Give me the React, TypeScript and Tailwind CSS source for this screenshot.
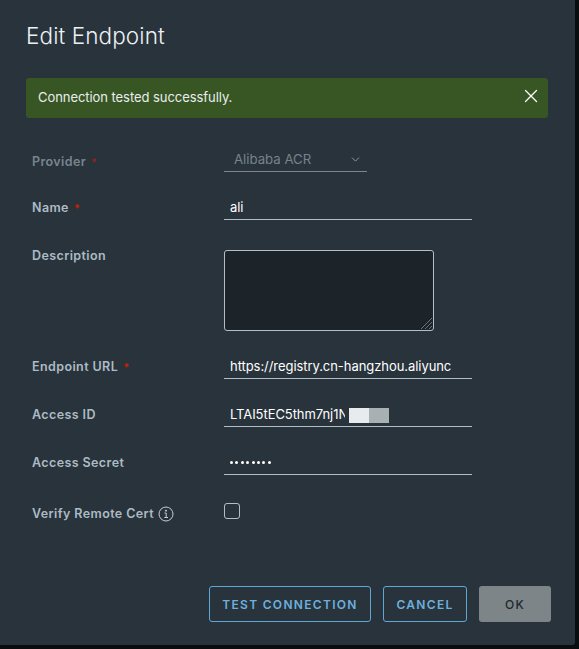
import { X, ChevronDown } from 'lucide-react';

const labelCls = 'w-[192px] shrink-0 text-[12.5px] leading-[20px] font-semibold text-[#adbbc4] tracking-[0.4px]';
const inputCls = 'relative h-[25px] w-[248px] border-b border-[#b3bfc6] pl-[6px] text-[13px] leading-[24px] text-white tracking-[-0.06px] whitespace-nowrap';

const Required = () => <span className="ml-[5px] text-[#c92100] text-[11px]">*</span>;

const App = () => {
  return (
    <div className="h-[649px] w-[579px] bg-[#0a0d0f] overflow-hidden font-['Inter','Open_Sans',sans-serif]">
      <div className="h-[645px] w-[575px] rounded-br-[3px] bg-[#28333c] pl-[26px] pr-[27px] pt-[21px] flex flex-col">
        <h1 className="text-[22.5px] leading-[30px] font-light text-[#eef1f3] tracking-[0.1px]">Edit Endpoint</h1>

        <div className="mt-[27px] h-[40px] rounded-[3px] bg-[#375623] pl-[12px] pr-[6px] flex items-center justify-between">
          <span className="text-[13px] text-[#eaedf0] tracking-[-0.06px]">Connection tested successfully.</span>
          <X className="w-[22px] h-[22px] text-white mb-[4px]" strokeWidth={1.4} />
        </div>

        <div className="mt-[24px] pl-[6px] flex flex-col">
          <div className="flex items-end h-[30px]">
            <span className={`${labelCls} opacity-60`}>
              Provider<Required />
            </span>
            <div className="h-[30px] w-[143px] border-b border-[#7c878e] pl-[10px] pr-[5px] flex items-center justify-between text-[13.2px] text-[#76838b] pt-[6px]">
              Alibaba ACR
              <ChevronDown className="w-[13px] h-[13px] text-[#a3adb3]" strokeWidth={1.5} />
            </div>
          </div>

          <div className="mt-[23px] flex items-center h-[25px]">
            <span className={labelCls}>
              Name<Required />
            </span>
            <div className={inputCls}>ali</div>
          </div>

          <div className="mt-[30px] flex items-start h-[81px]">
            <span className={`${labelCls} mt-[-4px]`}>Description</span>
            <div className="relative h-[81px] w-[210px] rounded-[3px] border border-[#b3bfc6] bg-[#1c2329]">
              <svg className="absolute right-0 bottom-0" width="13" height="13" viewBox="0 0 13 13" fill="none" stroke="#8b969d" strokeWidth="0.7">
                <path d="M1 12 12 1M5 12 12 5M9 12 12 9" />
              </svg>
            </div>
          </div>

          <div className="mt-[23px] flex items-center h-[25px]">
            <span className={labelCls}>
              Endpoint URL<Required />
            </span>
            <div className={inputCls}>https://registry.cn-hangzhou.aliyunc</div>
          </div>

          <div className="mt-[23px] flex items-center h-[25px]">
            <span className={labelCls}>Access ID</span>
            <div className={inputCls}>
              LTAI5tEC5thm7nj1N
              <div className="absolute left-[121px] top-[6px] h-[15px] w-[44px] bg-[#28333c] pl-[4px] flex">
                <span className="w-[20px] bg-[#e8ebee]" />
                <span className="w-[20px] bg-[#a9b0b4]" />
              </div>
            </div>
          </div>

          <div className="mt-[23px] flex items-center h-[25px]">
            <span className={labelCls}>Access Secret</span>
            <div className={`${inputCls} flex items-center gap-[2.4px]`}>
              {Array.from({ length: 8 }).map((_, i) => (
                <span key={i} className="h-[3px] w-[3px] rounded-full bg-white" />
              ))}
            </div>
          </div>

          <div className="mt-[28px] flex items-start h-[16px]">
            <span className={`${labelCls} flex items-center pt-[1px]`}>
              Verify Remote Cert
              <svg className="ml-[4px]" width="16" height="16" viewBox="0 0 16 16" fill="none" stroke="#c3ced5" strokeWidth="1">
                <circle cx="8" cy="8" r="7" />
                <path d="M6.5 7H8.2V11.5M6.3 11.5H10" />
                <circle cx="8" cy="4.7" r="0.6" fill="#c3ced5" />
              </svg>
            </span>
            <div className="h-[16px] w-[16px] rounded-[3px] border border-[#b3bfc6]" />
          </div>
        </div>

        <div className="mt-auto mb-[23px] mr-[-3px] flex justify-end gap-[12px] text-[12px] font-semibold tracking-[1.3px]">
          <button className="h-[36px] w-[162px] rounded-[3px] border border-[#5ea8d8] pt-[1px] text-[#6db0dc]">TEST CONNECTION</button>
          <button className="h-[36px] w-[84px] rounded-[3px] border border-[#5ea8d8] pt-[1px] text-[#6db0dc]">CANCEL</button>
          <button className="h-[36px] w-[72px] rounded-[3px] bg-[#7d8589] pt-[1px] font-medium text-[#1f272c]">OK</button>
        </div>
      </div>
    </div>
  );
};

export default App;
